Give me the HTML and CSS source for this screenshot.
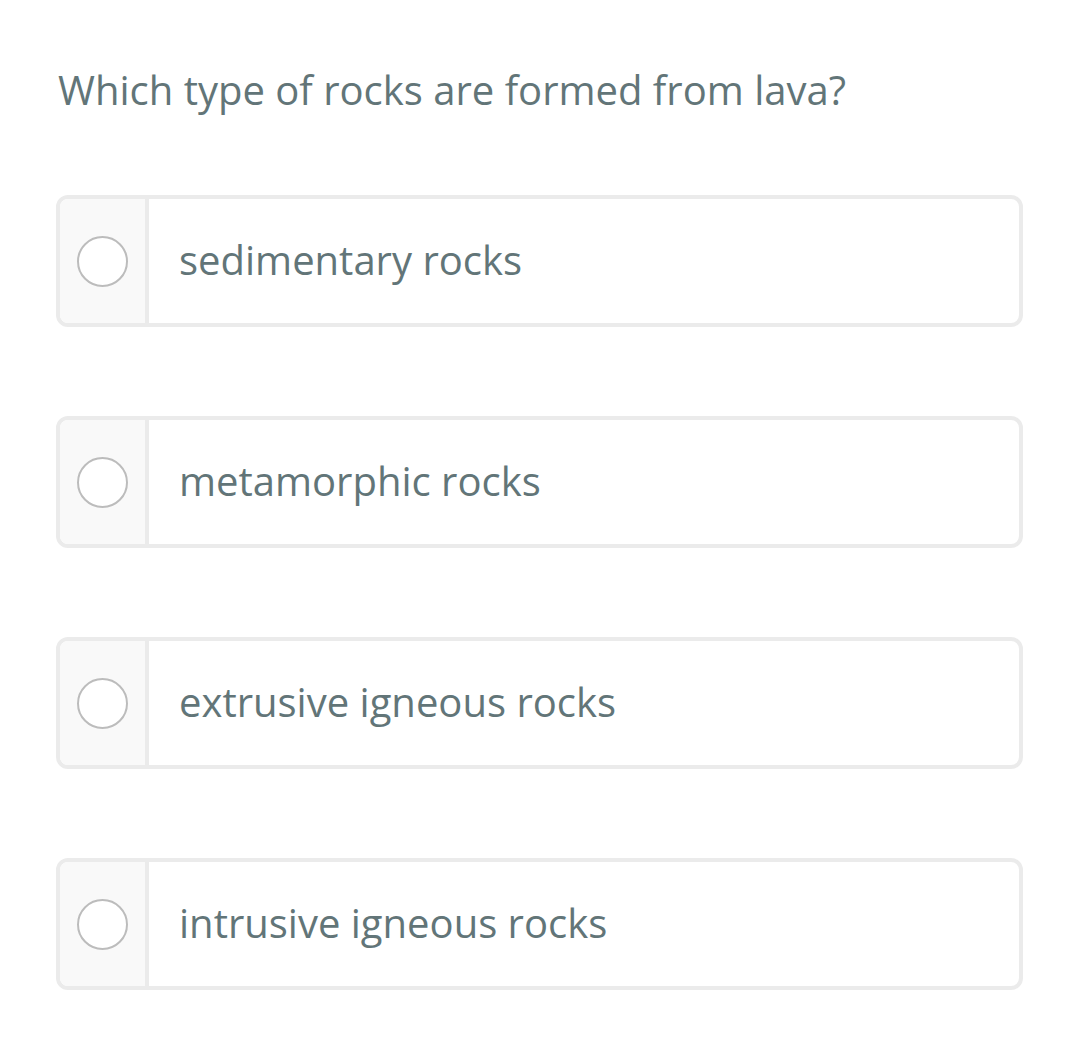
FILE: index.html
```html
<!DOCTYPE html>
<html>
<head>
<meta charset="utf-8">
<link rel="stylesheet" href="styles.css">
</head>
<body>
<div class="quiz">
  <h1 class="question">Which type of rocks are formed from lava?</h1>
  <div class="options">
    <div class="option"><div class="radio-cell"><span class="radio"></span></div><div class="label">sedimentary rocks</div></div>
    <div class="option"><div class="radio-cell"><span class="radio"></span></div><div class="label">metamorphic rocks</div></div>
    <div class="option"><div class="radio-cell"><span class="radio"></span></div><div class="label">extrusive igneous rocks</div></div>
    <div class="option"><div class="radio-cell"><span class="radio"></span></div><div class="label">intrusive igneous rocks</div></div>
  </div>
</div>
</body>
</html>
```
FILE: styles.css
```css
html, body { margin: 0; padding: 0; background: #fff; }
body { font-family: "Open Sans", "Noto Sans", sans-serif; color: #627578; }
.quiz { padding: 60px 42px 0 56px; }
.question {
  margin: 0 0 0 2px;
  font-weight: 400;
  font-size: 40px;
  line-height: 60px;
}
.options {
  margin-top: 75px;
  display: flex;
  flex-direction: column;
  gap: 89px;
}
.option {
  display: flex;
  height: 132px;
  box-sizing: border-box;
  border: 4px solid #ebebeb;
  border-radius: 12px;
  overflow: hidden;
}
.radio-cell {
  width: 85px;
  flex: none;
  background: #f9f9f9;
  border-right: 4px solid #ebebeb;
  display: flex;
  align-items: center;
  justify-content: center;
}
.radio {
  width: 47px;
  height: 47px;
  border: 2px solid #bcbcbc;
  border-radius: 50%;
  background: #fff;
}
.label {
  flex: 1;
  display: flex;
  align-items: center;
  padding-left: 30px;
  padding-bottom: 4px;
  font-size: 40px;
}
```
